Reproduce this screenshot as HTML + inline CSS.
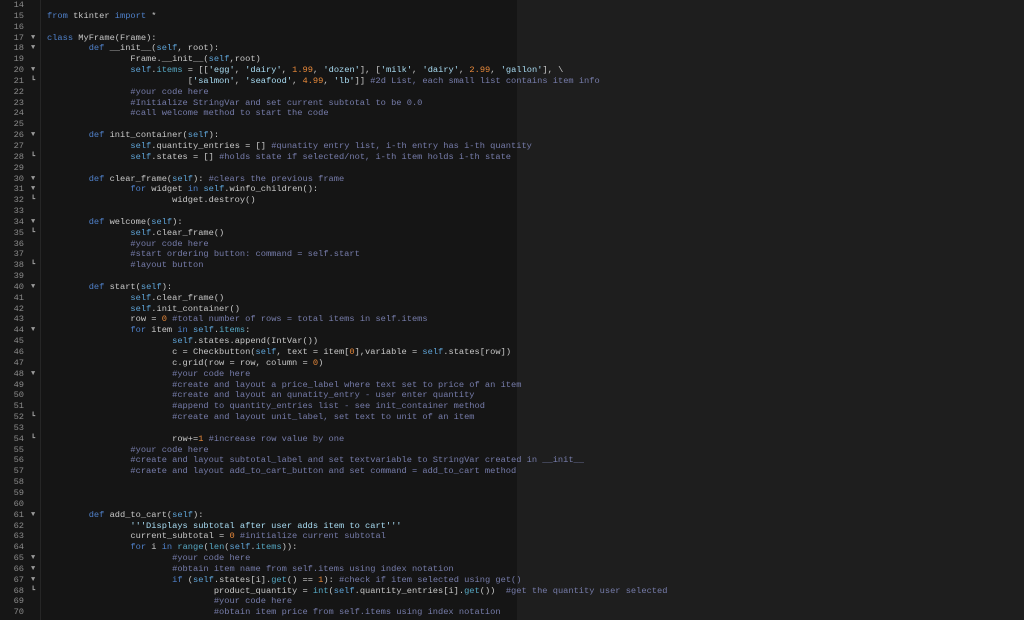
<!DOCTYPE html><html><head><meta charset="utf-8"><style>
body{margin:0;width:1024px;height:620px;background:#1e1e1e;overflow:hidden;font-family:"Liberation Mono",monospace;font-size:8.7px}
#ed{position:absolute;left:0;top:0;width:517px;height:620px;background:#151515}
#gut{position:absolute;left:0;top:0;width:40px;height:620px;background:#161616;border-right:1px solid #262626}
.g,.c{position:absolute;top:0;white-space:pre;line-height:10.84px}
.g{left:0;width:24px;text-align:right;color:#8a8a8a}
.f{position:absolute;left:31px;top:0;white-space:pre;line-height:10.84px;color:#9a9a9a;font-size:7px}
.c{left:47px;color:#c8c8c8;tab-size:8;-moz-tab-size:8}
.k{color:#4f80c9}.s{color:#5ea3d6}.t{color:#a9dcf3}.n{color:#e8893a}.m{color:#767caa}.b{color:#56a8c4}
</style></head><body><div id="ed"></div><div id="gut"></div>
<div class="g">14
15
16
17
18
19
20
21
22
23
24
25
26
27
28
29
30
31
32
33
34
35
36
37
38
39
40
41
42
43
44
45
46
47
48
49
50
51
52
53
54
55
56
57
58
59
60
61
62
63
64
65
66
67
68
69
70</div>
<div class="f">


▼
▼

▼
┗




▼
 
┗

▼
▼
┗

▼
┗


┗

▼



▼



▼



┗

┗






▼



▼
▼
▼
┗

</div>
<div class="c">
<span class="k">from</span> tkinter <span class="k">import</span> *

<span class="k">class</span> MyFrame(Frame):
	<span class="k">def</span> __init__(<span class="s">self</span>, root):
		Frame.__init__(<span class="s">self</span>,root)
		<span class="s">self</span>.<span class="b">items</span> = [[<span class="t">'egg'</span>, <span class="t">'dairy'</span>, <span class="n">1.99</span>, <span class="t">'dozen'</span>], [<span class="t">'milk'</span>, <span class="t">'dairy'</span>, <span class="n">2.99</span>, <span class="t">'gallon'</span>], \
			   [<span class="t">'salmon'</span>, <span class="t">'seafood'</span>, <span class="n">4.99</span>, <span class="t">'lb'</span>]] <span class="m">#2d List, each small list contains item info</span>
		<span class="m">#your code here</span>
		<span class="m">#Initialize StringVar and set current subtotal to be 0.0</span>
		<span class="m">#call welcome method to start the code</span>

	<span class="k">def</span> init_container(<span class="s">self</span>):
		<span class="s">self</span>.quantity_entries = [] <span class="m">#qunatity entry list, i-th entry has i-th quantity</span>
		<span class="s">self</span>.states = [] <span class="m">#holds state if selected/not, i-th item holds i-th state</span>

	<span class="k">def</span> clear_frame(<span class="s">self</span>): <span class="m">#clears the previous frame</span>
		<span class="k">for</span> widget <span class="k">in</span> <span class="s">self</span>.winfo_children():
			widget.destroy()

	<span class="k">def</span> welcome(<span class="s">self</span>):
		<span class="s">self</span>.clear_frame()
		<span class="m">#your code here</span>
		<span class="m">#start ordering button: command = self.start</span>
		<span class="m">#layout button</span>

	<span class="k">def</span> start(<span class="s">self</span>):
		<span class="s">self</span>.clear_frame()
		<span class="s">self</span>.init_container()
		row = <span class="n">0</span> <span class="m">#total number of rows = total items in self.items</span>
		<span class="k">for</span> item <span class="k">in</span> <span class="s">self</span>.<span class="b">items</span>:
			<span class="s">self</span>.states.append(IntVar())
			c = Checkbutton(<span class="s">self</span>, text = item[<span class="n">0</span>],variable = <span class="s">self</span>.states[row])
			c.grid(row = row, column = <span class="n">0</span>)
			<span class="m">#your code here</span>
			<span class="m">#create and layout a price_label where text set to price of an item</span>
			<span class="m">#create and layout an qunatity_entry - user enter quantity</span>
			<span class="m">#append to quantity_entries list - see init_container method</span>
			<span class="m">#create and layout unit_label, set text to unit of an item</span>

			row+=<span class="n">1</span> <span class="m">#increase row value by one</span>
		<span class="m">#your code here</span>
		<span class="m">#create and layout subtotal_label and set textvariable to StringVar created in __init__</span>
		<span class="m">#craete and layout add_to_cart_button and set command = add_to_cart method</span>



	<span class="k">def</span> add_to_cart(<span class="s">self</span>):
		<span class="t">'''Displays subtotal after user adds item to cart'''</span>
		current_subtotal = <span class="n">0</span> <span class="m">#initialize current subtotal</span>
		<span class="k">for</span> i <span class="k">in</span> <span class="b">range</span>(<span class="b">len</span>(<span class="s">self</span>.<span class="b">items</span>)):
			<span class="m">#your code here</span>
			<span class="m">#obtain item name from self.items using index notation</span>
			<span class="k">if</span> (<span class="s">self</span>.states[i].<span class="b">get</span>() == <span class="n">1</span>): <span class="m">#check if item selected using get()</span>
				product_quantity = <span class="b">int</span>(<span class="s">self</span>.quantity_entries[i].<span class="b">get</span>())  <span class="m">#get the quantity user selected</span>
				<span class="m">#your code here</span>
				<span class="m">#obtain item price from self.items using index notation</span>
</div>
</body></html>
